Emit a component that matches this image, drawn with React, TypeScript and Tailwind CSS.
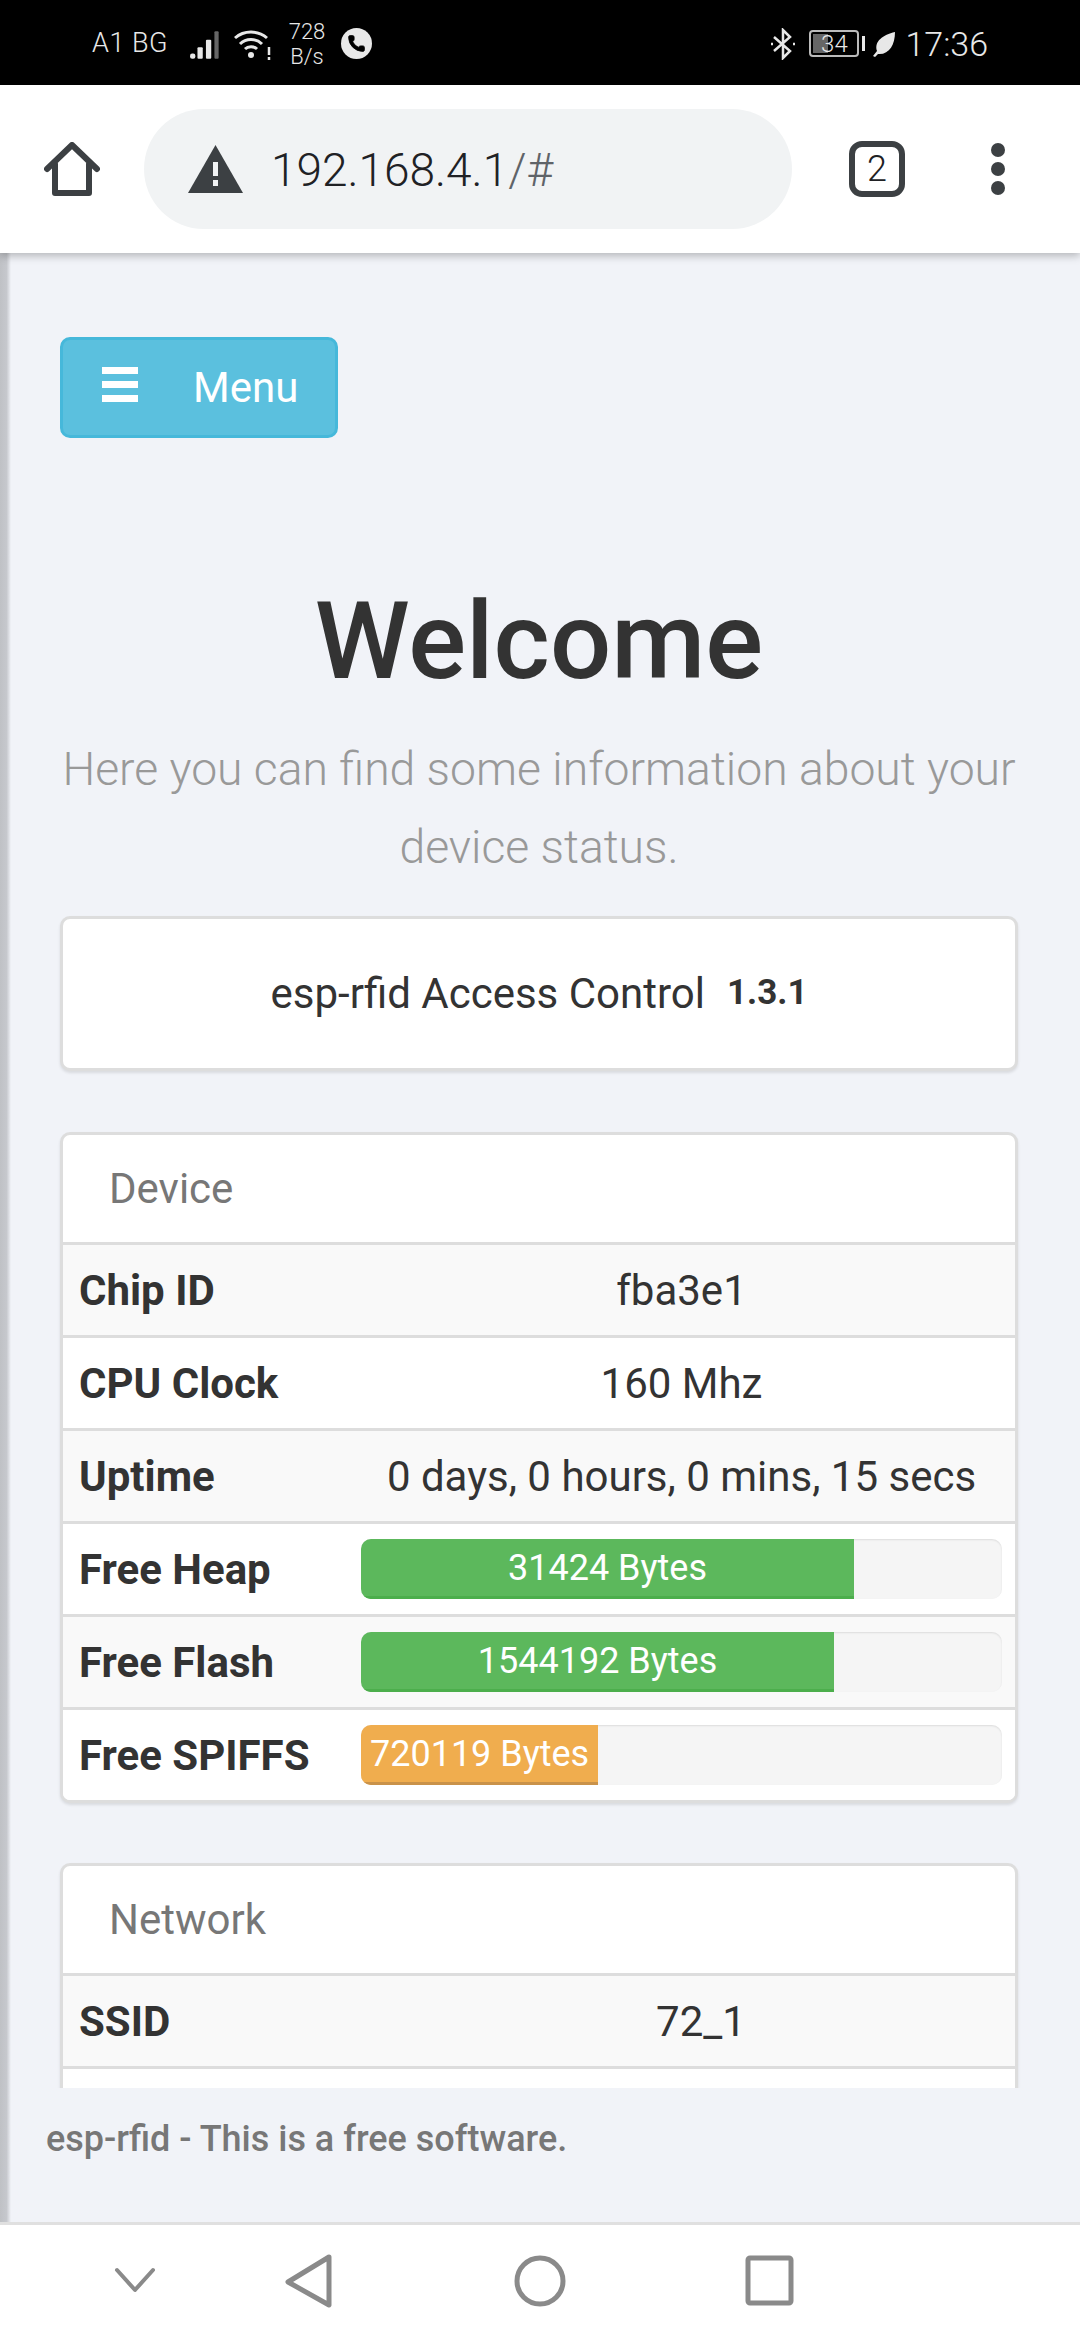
import { Phone } from "lucide-react";

function StatusBar() {
  return (
    <div className="h-[85px] bg-black text-[#e8e8e8] flex items-center justify-between pl-[92px] pr-[92px] pt-[2px] font-light shrink-0">
      <div className="flex items-center">
        <span className="text-[27px] tracking-[0.5px] w-[97px]">A1 BG</span>
        <svg width="36" height="34" viewBox="0 0 34 32" className="mr-[8px]">
          <rect x="1" y="25" width="5" height="5" rx="2" fill="#e8e8e8" />
          <rect x="8" y="19" width="5" height="11" rx="1" fill="#e8e8e8" />
          <rect x="16" y="12" width="5" height="18" rx="1" fill="#e8e8e8" />
          <rect x="24" y="4" width="4" height="26" rx="1" fill="#666" />
        </svg>
        <svg width="40" height="34" viewBox="0 0 40 34" fill="none" stroke="#e8e8e8" strokeWidth="3" className="mr-[13px]">
          <path d="M2 11C11 3 25 3 34 11" />
          <path d="M7 17C13 11 23 11 29 17" />
          <path d="M12 22C15 19 21 19 24 22" />
          <circle cx="18" cy="28" r="3" fill="#e8e8e8" stroke="none" />
          <path d="M36 20V28M36 30V33" strokeWidth="2.5" />
        </svg>
        <div className="flex flex-col items-center text-[22px] leading-[25px] w-[42px] mr-[13px]">
          <span>728</span>
          <span>B/s</span>
        </div>
        <div className="w-[31px] h-[31px] rounded-full bg-[#e8e8e8] flex items-center justify-center">
          <Phone size={19} fill="#000" stroke="#000" strokeWidth={1} />
        </div>
      </div>
      <div className="flex items-center">
        <svg width="26" height="32" viewBox="0 0 26 32" fill="none" stroke="#e8e8e8" strokeWidth="2.5" className="mr-[13px]">
          <path d="M4 9L20 23L13 30V2L20 9L4 23" />
          <path d="M1 16H3M23 16H25" />
        </svg>
        <div className="relative w-[50px] h-[27px] border-2 border-[#bbb] rounded-[4px] mr-[3px] overflow-hidden">
          <div className="absolute left-[2px] top-[2px] bottom-[2px] w-[15px] bg-[#666]" />
          <span className="absolute inset-0 flex items-center justify-center text-[24px] leading-none">34</span>
        </div>
        <div className="w-[3px] h-[15px] bg-[#e8e8e8] mr-[7px]" />
        <svg width="24" height="26" viewBox="0 0 24 26" className="mr-[9px]">
          <path d="M23 1C23 14 17 24 6 23L3 26L1 25L5 20C2 10 11 4 23 1Z" fill="#e8e8e8" />
        </svg>
        <span className="text-[34px] leading-none">17:36</span>
      </div>
    </div>
  );
}

function Toolbar() {
  return (
    <div className="h-[168px] bg-white flex items-center shrink-0 relative z-10 shadow-[0_3px_8px_rgba(0,0,0,0.25)]">
      <div className="w-[144px] flex justify-center">
        <svg width="56" height="54" viewBox="0 0 56 54" fill="none" stroke="#3c4043" strokeWidth="6" strokeLinejoin="round" strokeLinecap="round">
          <path d="M3 27L28 3L53 27M11 22V51H45V22" />
        </svg>
      </div>
      <div className="w-[648px] h-[120px] rounded-full bg-[#f1f3f4] flex items-center pl-[44px]">
        <svg width="55" height="48" viewBox="0 0 55 48" className="mr-[28px]">
          <path d="M27.5 0L55 48H0Z" fill="#3c4043" />
          <rect x="25" y="17" width="5" height="14" fill="#f1f3f4" />
          <rect x="25" y="35" width="5" height="6" fill="#f1f3f4" />
        </svg>
        <span className="text-[46px] font-light text-[#202124] pt-[3px]">
          192.168.4.1<span className="text-[#5f6368]">/#</span>
        </span>
      </div>
      <div className="ml-[57px] w-[56px] h-[56px] border-[6px] border-[#3c4043] rounded-[13px] flex items-center justify-center text-[36px] font-light text-[#202124]">
        2
      </div>
      <div className="ml-[86px] flex flex-col gap-[5px]">
        <div className="w-[14px] h-[14px] rounded-full bg-[#3c4043]" />
        <div className="w-[14px] h-[14px] rounded-full bg-[#3c4043]" />
        <div className="w-[14px] h-[14px] rounded-full bg-[#3c4043]" />
      </div>
    </div>
  );
}

function Row({ label, value, odd, wide, children }: { label: string; value?: string; odd?: boolean; wide?: boolean; children?: React.ReactNode }) {
  return (
    <div className={`h-[93px] last:h-[90px] flex items-center border-b-[3px] border-[#ddd] last:border-b-0 ${odd ? "bg-[#f9f9f9]" : "bg-white"}`}>
      <div className={`pl-[16px] text-[42px] font-bold text-[#333] shrink-0 ${wide ? "w-[337px]" : "w-[298px]"}`}>{label}</div>
      {children ?? <div className="flex-1 text-center text-[42px] font-normal text-[#333] pr-[13px]">{value}</div>}
    </div>
  );
}

function Bar({ pct, text, color, edge }: { pct: number; text: string; color: string; edge: string }) {
  return (
    <div className="w-[641px] h-[60px] rounded-[10px] bg-[#f5f5f5] overflow-hidden shadow-[inset_0_1px_2px_rgba(0,0,0,0.1)]">
      <div
        className={`h-full flex items-center justify-center text-white text-[36px] font-normal border-b-[3px] ${color} ${edge}`}
        style={{ width: `${pct}%` }}
      >
        {text}
      </div>
    </div>
  );
}

function Panel({ title, children }: { title: string; children: React.ReactNode }) {
  return (
    <div className="border-[3px] border-[#ddd] rounded-[10px] bg-white shadow-[0_2px_3px_rgba(0,0,0,0.1)] overflow-hidden">
      <div className="h-[110px] flex items-center pl-[46px] text-[42px] font-normal text-[#777] border-b-[3px] border-[#ddd]">{title}</div>
      {children}
    </div>
  );
}

function NavBar() {
  return (
    <div className="h-[118px] bg-white border-t-[3px] border-[#e0e0e0] shrink-0 flex items-center relative">
      <svg width="1080" height="115" viewBox="0 0 1080 115" fill="none" stroke="#8a8a8a" strokeWidth="4" strokeLinejoin="round" strokeLinecap="round">
        <path d="M117 45L135 65L153 45" />
        <path d="M329 32L288 57L329 80Z" strokeWidth="5" />
        <circle cx="540" cy="56" r="23" strokeWidth="5" />
        <rect x="748" y="33" width="43" height="45" rx="2" strokeWidth="5" />
      </svg>
    </div>
  );
}

export default function App() {
  return (
    <div className="w-[1080px] h-[2340px] flex flex-col overflow-hidden font-['Roboto',sans-serif] bg-[#f1f3f8]">
      <StatusBar />
      <Toolbar />
      <div className="flex-1 flex min-h-0">
        <div className="w-[11px] shrink-0 bg-gradient-to-r from-[#bfc1c5] via-[#c6c8cd] via-60% to-[#f1f3f8]" />
        <div className="flex-1 flex flex-col min-h-0">
          <div className="h-[1835px] overflow-hidden pl-[49px] pr-[62px] pt-[84px]">
            <button className="w-[278px] h-[101px] bg-[#5bc0de] border-[3px] border-[#46b8da] rounded-[10px] text-white flex items-center pl-[39px] text-[42px] font-normal">
              <svg width="36" height="36" viewBox="0 0 36 36" className="mr-[55px] -mt-[5px]" fill="#fff">
                <rect y="0" width="36" height="7" />
                <rect y="14" width="36" height="7" />
                <rect y="28" width="36" height="7" />
              </svg>
              Menu
            </button>
            <h1 className="mt-[144px] text-center text-[108px] leading-[119px] font-medium text-[#333]">Welcome</h1>
            <p className="mt-[29px] text-center text-[46.3px] leading-[78px] font-light text-[#999]">
              Here you can find some information about your
              <br />
              device status.
            </p>
            <div className="mt-[30px] h-[155px] border-[3px] border-[#ddd] rounded-[10px] bg-white shadow-[0_2px_3px_rgba(0,0,0,0.1)] flex items-center justify-center text-[42px] font-normal text-[#333]">
              esp-rfid Access Control
              <span className="ml-[22px] text-[35px] font-bold">1.3.1</span>
            </div>
            <div className="mt-[61px]">
              <Panel title="Device">
                <Row label="Chip ID" value="fba3e1" odd />
                <Row label="CPU Clock" value="160 Mhz" />
                <Row label="Uptime" value="0 days, 0 hours, 0 mins, 15 secs" odd />
                <Row label="Free Heap">
                  <Bar pct={76.9} text="31424 Bytes" color="bg-[#5cb85c]" edge="border-[#4cae4c]" />
                </Row>
                <Row label="Free Flash" odd>
                  <Bar pct={73.8} text="1544192 Bytes" color="bg-[#5cb85c]" edge="border-[#4cae4c]" />
                </Row>
                <Row label="Free SPIFFS">
                  <Bar pct={37} text="720119 Bytes" color="bg-[#f0ad4e]" edge="border-[#c9924a]" />
                </Row>
              </Panel>
            </div>
            <div className="mt-[60px]">
              <Panel title="Network">
                <Row label="SSID" value="72_1" odd wide />
                <div className="h-[93px] bg-white" />
              </Panel>
            </div>
          </div>
          <div className="flex-1 pl-[35px] pt-[24px] text-[36px] font-medium text-[#777]">esp-rfid - This is a free software.</div>
        </div>
      </div>
      <NavBar />
    </div>
  );
}
